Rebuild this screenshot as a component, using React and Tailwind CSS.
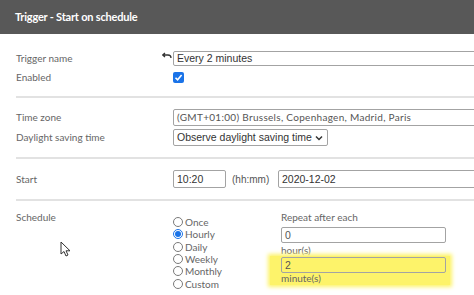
import React from "react";

const label = "text-[10px] text-[#666] [font-family:Lato,sans-serif] whitespace-nowrap";
const box = "border border-[#a3a3a3] bg-white rounded-[2px] [font-family:'Liberation_Sans',Arial,sans-serif] text-[10.5px] text-[#333] leading-none flex items-center pl-[3px] whitespace-nowrap";

function Radio({ checked, children }) {
  return (
    <div className="flex items-center h-[12.3px] gap-[2px]">
      {checked ? (
        <span className="w-[10px] h-[10px] rounded-full border border-[#1a73e8] bg-white flex items-center justify-center">
          <span className="w-[6px] h-[6px] rounded-full bg-[#1a73e8]" />
        </span>
      ) : (
        <span className="w-[10px] h-[10px] rounded-full border border-[#7a7a7a] bg-white" />
      )}
      <span className={label + " leading-[12px]"}>{children}</span>
    </div>
  );
}

function Divider() {
  return <div className="ml-[16px] h-[2px] bg-[#e2e2e2]" />;
}

export default function App() {
  return (
    <div className="relative w-[474px] h-[295px] overflow-hidden bg-white">
      {/* header */}
      <div className="h-[34px] bg-[#585858] flex items-center px-[15px]">
        <span className="text-white font-bold text-[11px] tracking-[-0.2px] [font-family:Lato,sans-serif]">
          Trigger - Start on schedule
        </span>
      </div>

      {/* name + enabled */}
      <div className="pl-[16px] pt-[17px]">
        <div className="flex items-center h-[15px]">
          <div className={label + " w-[146px]"}>Trigger name</div>
          <svg width="10" height="8" viewBox="0 0 10 8" className="mr-[1px] -mt-[6px]">
            <path d="M3 1 L0.8 3 L3 5 M1 3 H6 C8 3 9 4 9 6" fill="none" stroke="#333" strokeWidth="1.3" />
          </svg>
          <div className={box + " flex-1 h-[15px] -mr-[4px]"}>Every 2 minutes</div>
        </div>
        <div className="flex items-center h-[20px] mt-[1px]">
          <div className={label + " w-[157px]"}>Enabled</div>
          <span className="w-[11px] h-[11px] rounded-[2px] bg-[#1a73e8] flex items-center justify-center">
            <svg width="9" height="9" viewBox="0 0 9 9">
              <path d="M1.5 4.7 L3.6 6.8 L7.6 2" fill="none" stroke="#fff" strokeWidth="1.6" />
            </svg>
          </span>
        </div>
      </div>
      <div className="mt-[9px]" />
      <Divider />

      {/* time zone */}
      <div className="pl-[16px] pt-[11px]">
        <div className="flex items-center h-[17px]">
          <div className={label + " w-[157px]"}>Time zone</div>
          <div className="flex-1 h-[17px] -mr-[4px] border border-[#a3a3a3] rounded-[2px] flex items-center pl-[3px] text-[10px] tracking-[0.3px] text-[#555] whitespace-nowrap [font-family:Lato,sans-serif]">
            (GMT+01:00) Brussels, Copenhagen, Madrid, Paris
          </div>
        </div>
        <div className="flex items-center h-[17px] mt-[3px]">
          <div className={label + " w-[157px]"}>Daylight saving time</div>
          <div className={box + " w-[155px] h-[17px] justify-between pr-[4px]"}>
            <span>Observe daylight saving time</span>
            <svg width="8" height="6" viewBox="0 0 8 6">
              <path d="M1 1.5 L4 4.5 L7 1.5" fill="none" stroke="#333" strokeWidth="1.5" />
            </svg>
          </div>
        </div>
      </div>
      <div className="mt-[11px]" />
      <Divider />

      {/* start */}
      <div className="pl-[16px] pt-[11px]">
        <div className="flex items-center h-[18px]">
          <div className={label + " w-[157px]"}>Start</div>
          <div className={box + " w-[53px] h-[18px]"}>10:20</div>
          <span className="ml-[6px] w-[46px] text-[10px] text-[#555] [font-family:'Liberation_Sans',Arial,sans-serif]">(hh:mm)</span>
          <div className={box + " flex-1 h-[18px] -mr-[4px]"}>2020-12-02</div>
        </div>
      </div>
      <div className="mt-[11px]" />
      <Divider />

      {/* schedule */}
      <div className="pl-[16px] pt-[9px] flex">
        <div className={label + " w-[157px] leading-[14px]"}>Schedule</div>
        <div className="pt-[6px] w-[108px]">
          <Radio>Once</Radio>
          <Radio checked>Hourly</Radio>
          <Radio>Daily</Radio>
          <Radio>Weekly</Radio>
          <Radio>Monthly</Radio>
          <Radio>Custom</Radio>
        </div>
        <div className="flex flex-col">
          <div className={label + " leading-[14px]"}>Repeat after each</div>
          <div className={box + " w-[165px] h-[16px] mt-[3px] text-[#555]"}>0</div>
          <div className={label + " leading-[12px] mt-[1px]"}>hour(s)</div>
          <div className="-ml-[11px] w-[180px] bg-[#fdf36a] pl-[11px] pt-[1px] pb-[1px] shadow-[0_0_4px_2px_#fdf36a]">
            <div className={box + " w-[165px] h-[16px] !bg-[#fdf36a] border-[#8a7f2a] text-[#555]"}>2</div>
            <div className={label + " leading-[11px] text-[#7a7536]"}>minute(s)</div>
          </div>
        </div>
      </div>

      {/* mouse cursor */}
      <svg className="absolute left-[60px] top-[241px]" width="12" height="17" viewBox="0 0 12 17">
        <path d="M1 1 L1 13 L4 10.5 L6 15 L8 14 L6 9.8 L10 9.8 Z" fill="#fff" stroke="#333" strokeWidth="1" strokeLinejoin="round" />
      </svg>
    </div>
  );
}
